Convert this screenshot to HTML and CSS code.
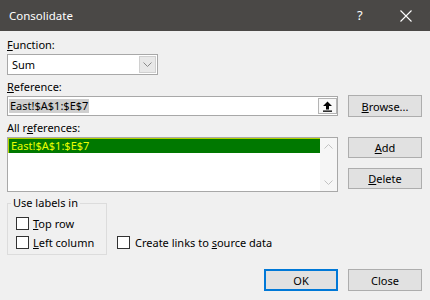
FILE: index.html
```html
<!DOCTYPE html>
<html>
<head>
<meta charset="utf-8">
<link rel="stylesheet" href="styles.css">
</head>
<body>
<div class="dialog">
  <div class="titlebar">
    <span class="title">Consolidate</span>
    <span class="help">?</span>
    <span class="close-x">
      <svg width="12" height="12" viewBox="0 0 12 12"><path d="M0.5 0.5 L11.5 11.5 M11.5 0.5 L0.5 11.5" stroke="#fff" stroke-width="1.1" fill="none"/></svg>
    </span>
  </div>
  <div class="content">
    <div class="label label-fn"><u>F</u>unction:</div>
    <div class="combo">
      <span class="combo-text">Sum</span>
      <span class="combo-btn">
        <svg width="9" height="5" viewBox="0 0 9 5"><path d="M0.5 0.5 L4.5 4.5 L8.5 0.5" stroke="#8a8a8a" stroke-width="1" fill="none"/></svg>
      </span>
    </div>
    <div class="label label-ref"><u>R</u>eference:</div>
    <div class="ref-row">
      <div class="refbox">
        <span class="ref-text"><span class="sel">East!$A$1:$E$7</span></span>
        <span class="collapse-btn">
          <svg width="11" height="11" viewBox="0 0 11 11"><path d="M5.5 0.5 L10 5 L7 5 L7 8.5 L4 8.5 L4 5 L1 5 Z" fill="#000"/><rect x="1" y="9.5" width="9" height="1.3" fill="#000"/></svg>
        </span>
      </div>
      <button class="btn"><u>B</u>rowse...</button>
    </div>
    <div class="label label-all">All r<u>e</u>ferences:</div>
    <div class="list-row">
      <div class="listbox">
        <div class="items">
          <div class="item selected">East!$A$1:$E$7</div>
        </div>
        <div class="scroll">
          <span class="arrow"><svg width="9" height="5" viewBox="0 0 9 5"><path d="M0.5 4.5 L4.5 0.5 L8.5 4.5" stroke="#c2c2c2" stroke-width="1" fill="none"/></svg></span>
          <span class="arrow"><svg width="9" height="5" viewBox="0 0 9 5"><path d="M0.5 0.5 L4.5 4.5 L8.5 0.5" stroke="#c2c2c2" stroke-width="1" fill="none"/></svg></span>
        </div>
      </div>
      <div class="side">
        <button class="btn btn-side"><u>A</u>dd</button>
        <button class="btn btn-side"><u>D</u>elete</button>
      </div>
    </div>
    <div class="labels-row">
      <fieldset class="group">
        <legend>Use labels in</legend>
        <label class="check"><span class="box"></span><span><u>T</u>op row</span></label>
        <label class="check"><span class="box"></span><span><u>L</u>eft column</span></label>
      </fieldset>
      <label class="check links"><span class="box"></span><span>Create links to <u>s</u>ource data</span></label>
    </div>
    <div class="footer">
      <button class="btn btn-default">OK</button>
      <button class="btn">Close</button>
    </div>
  </div>
</div>
</body>
</html>
```
FILE: styles.css
```css
* { box-sizing: border-box; }
html, body { margin: 0; padding: 0; }
body {
  font-family: "Noto Sans", "Liberation Sans", sans-serif;
  font-size: 11px;
  color: #000;
  background: #f0f0f0;
}
.dialog {
  width: 430px;
  height: 300px;
  background: #f0f0f0;
  overflow: hidden;
}
.titlebar {
  height: 31px;
  background: #4a4846;
  color: #fff;
  display: flex;
  align-items: center;
  padding-left: 9px;
}
.title { font-size: 11.5px; flex: 1; padding-bottom: 1px; }
.help { font-size: 13px; width: 12px; margin-right: 31px; padding-bottom: 1px; }
.close-x { width: 12px; height: 12px; margin-right: 18px; display: flex; }
.content {
  padding: 0 8px 0 7px;
}
.label {
  height: 16px;
  line-height: 16px;
}
.label-fn { margin-top: 6px; }
.label-ref { margin-top: 4px; }
.label-all { margin-top: 3px; }
u { text-decoration: underline; text-underline-offset: 1px; }

.combo {
  margin-top: 1px;
  width: 151px;
  height: 21px;
  border: 1px solid #a8a8a8;
  background: #fff;
  display: flex;
  align-items: stretch;
}
.combo-text { flex: 1; padding-left: 4px; line-height: 19px; }
.combo-btn {
  width: 17px;
  margin: 1px;
  background: #e8e8e8;
  border: 1px solid #d0d0d0;
  display: flex;
  align-items: center;
  justify-content: center;
}

.ref-row {
  height: 22px;
  display: flex;
  align-items: center;
  gap: 10px;
}
.refbox {
  width: 331px;
  height: 20px;
  border: 1px solid #a8a8a8;
  background: #fff;
  display: flex;
  align-items: stretch;
}
.ref-text { flex: 1; padding-left: 1px; display: flex; align-items: center; }
.sel { background: #cfcfcf; padding: 0 1px; line-height: 14px; }
.collapse-btn {
  width: 19px;
  margin: 1px 0 1px 0;
  background: #f8f8f8;
  border: 1px solid #b4b4b4;
  display: flex;
  align-items: center;
  justify-content: center;
}

.btn {
  font-family: inherit;
  font-size: 11px;
  color: #000;
  width: 74px;
  height: 22px;
  padding: 0;
  margin: 0;
  background: #e1e1e1;
  border: 1px solid #adadad;
  border-radius: 0;
}
.btn-default { border: 2px solid #0078d7; }

.list-row {
  margin-top: 1px;
  display: flex;
  gap: 10px;
}
.listbox {
  width: 331px;
  height: 55px;
  border: 1px solid #a8a8a8;
  background: #fff;
  display: flex;
}
.items { flex: 1; }
.item {
  height: 15px;
  line-height: 14px;
  padding-left: 2px;
}
.item.selected {
  background: #007800;
  color: #eaff00;
  border-top: 1px solid #b4d000;
  border-left: 1px solid #b4d000;
}
.scroll {
  width: 17px;
  background: #f6f6f6;
  display: flex;
  flex-direction: column;
  justify-content: space-between;
}
.arrow {
  height: 17px;
  display: flex;
  align-items: center;
  justify-content: center;
}
.side {
  display: flex;
  flex-direction: column;
  gap: 10px;
}
.btn-side { height: 21px; }

.labels-row {
  margin-top: 3px;
  display: flex;
  align-items: flex-end;
}
.group {
  width: 100px;
  margin: 0;
  padding: 3px 0 2px 8px;
  border: 1px solid #dcdcdc;
  min-width: 0;
}
.group legend {
  padding: 0 2px;
  margin-left: -5px;
  line-height: 16px;
  height: 16px;
}
.check {
  height: 19px;
  display: flex;
  align-items: center;
  gap: 4px;
  white-space: nowrap;
}
.box {
  width: 13px;
  height: 13px;
  border: 1px solid #333;
  background: #fff;
  flex: none;
}
.links {
  margin-left: 10px;
  margin-bottom: 3px;
  gap: 5px;
}
.footer {
  margin-top: 14px;
  display: flex;
  justify-content: flex-end;
  gap: 10px;
}
```
